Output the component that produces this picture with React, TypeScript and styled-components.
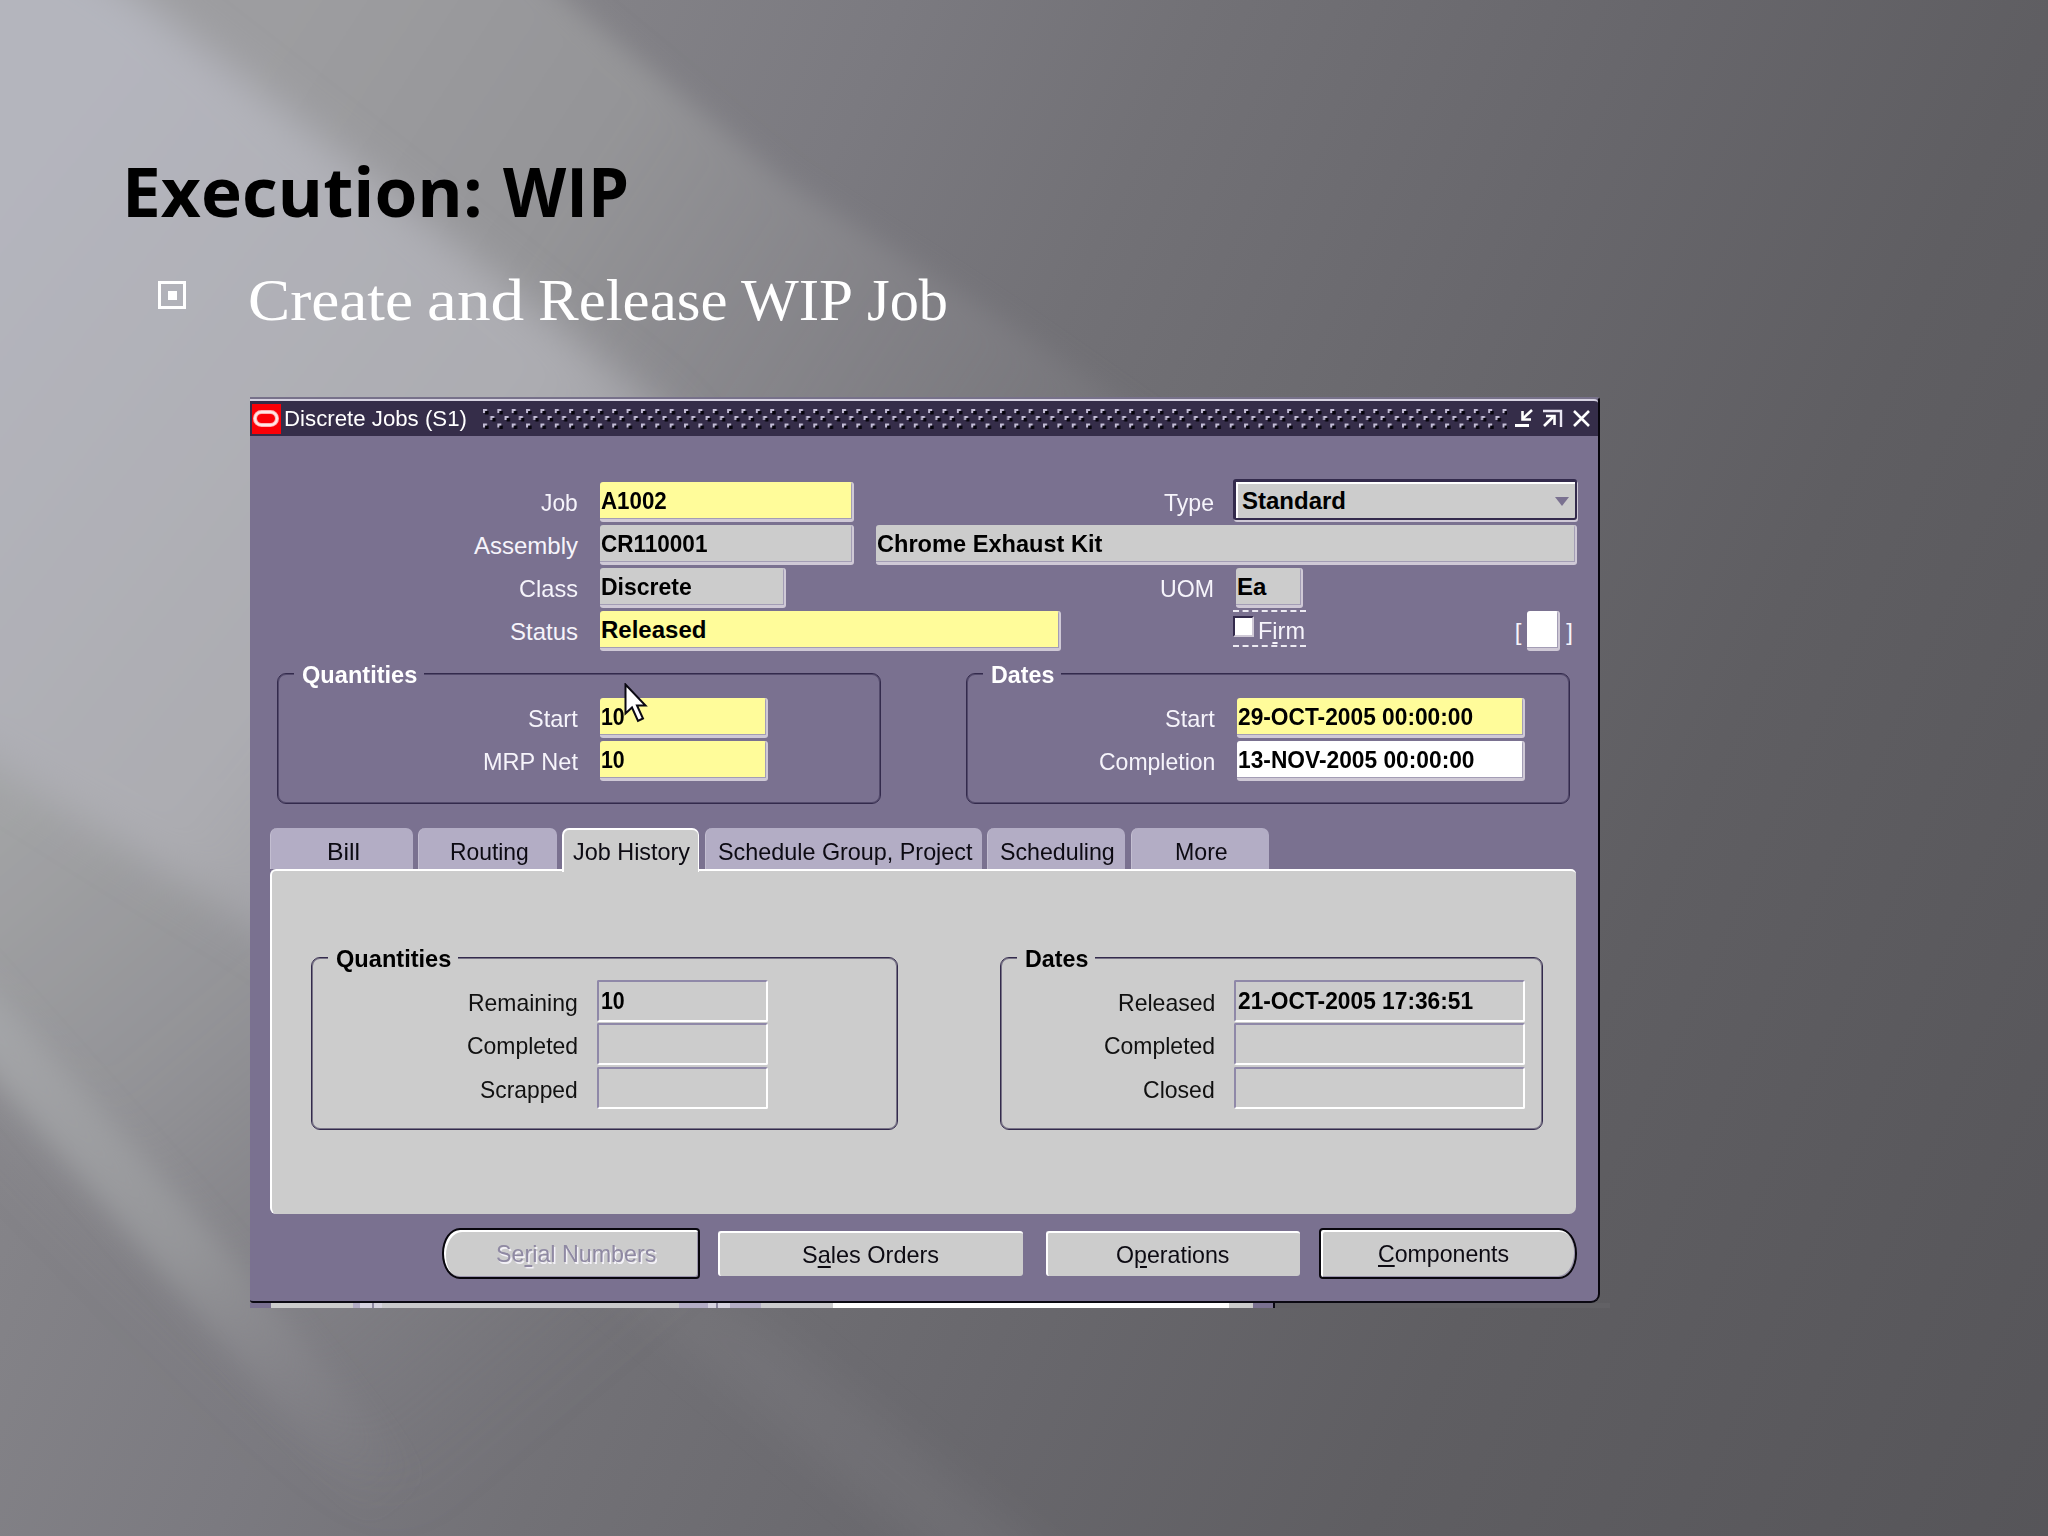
import React, { useLayoutEffect, useRef, useState } from 'react';
import styled, { createGlobalStyle, css } from 'styled-components';

const color = {
  body: '#7a7190',
  titleBar: '#352d49',
  line: '#332a4c',
  panel: '#cccccc',
  tab: '#b3adc5',
  yellow: '#fffc9a',
  edge: '#cfc9d6',
  edgeDark: '#a39db5',
  label: '#f6f4fb',
};

const GlobalStyle = createGlobalStyle`
  * { box-sizing: border-box; }
  html, body { margin: 0; padding: 0; }
  body { width: 2048px; height: 1536px; overflow: hidden; background: #6b6a6f; }
`;

/* ---------- text that is condensed or widened to a given width ---------- */

const FitBox = styled.span<{ $w: number }>`
  display: inline-block;
  flex: none;
  width: ${(p) => p.$w}px;
  text-align: left;
  white-space: pre;
`;
const FitInner = styled.span`
  display: inline-block;
  transform-origin: 0 50%;
`;

function Fit({ w, children }: { w: number; children: React.ReactNode }) {
  const ref = useRef<HTMLSpanElement>(null);
  const [scale, setScale] = useState(1);
  useLayoutEffect(() => {
    if (ref.current) setScale(w / ref.current.offsetWidth);
  }, [w]);
  return (
    <FitBox $w={w}>
      <FitInner ref={ref} style={{ transform: `scaleX(${scale})` }}>
        {children}
      </FitInner>
    </FitBox>
  );
}

/* ---------- slide ---------- */

const Slide = styled.main`
  position: relative;
  width: 2048px;
  height: 1536px;
  overflow: hidden;
  font-family: 'Liberation Sans', Arial, sans-serif;
`;
const BackdropSvg = styled.svg`
  position: absolute;
  inset: 0;
  display: block;
`;
const SlideContent = styled.div`
  position: relative;
  display: flex;
  flex-direction: column;
  height: 100%;
  padding-top: 141px;
`;
const SlideTitle = styled.h1`
  display: flex;
  gap: 20px;
  margin: 0 0 0 122px;
  height: 101px;
  line-height: 100px;
  font-family: 'Open Sans', 'Noto Sans', sans-serif;
  font-weight: 700;
  font-size: 68px;
  color: #000;
`;
const BulletRow = styled.div`
  display: flex;
  height: 80px;
  margin: 18px 0 57px 158px;
  font-family: 'Palatino Linotype', 'Book Antiqua', Palatino, 'Liberation Serif', serif;
  font-size: 59px;
  line-height: 80px;
  color: #fff;
`;
const BulletText = styled.div`
  display: flex;
  gap: 14px;
`;
const BulletMark = styled.span`
  display: grid;
  place-items: center;
  width: 28px;
  height: 28px;
  margin: 21px 62px 0 0;
  border: 3px solid #fff;
  &::after {
    content: '';
    width: 9px;
    height: 9px;
    background: #fff;
  }
`;

function Backdrop() {
  return (
    <BackdropSvg width="2048" height="1536" viewBox="0 0 2048 1536">
      <defs>
        <linearGradient id="base" gradientUnits="userSpaceOnUse" x1="0" y1="0" x2="2278" y2="1025">
          <stop offset="0" stopColor="#939297" />
          <stop offset=".22" stopColor="#838287" />
          <stop offset=".33" stopColor="#7b7a80" />
          <stop offset=".44" stopColor="#727176" />
          <stop offset=".6" stopColor="#68676c" />
          <stop offset=".75" stopColor="#5f5e62" />
          <stop offset="1" stopColor="#565559" />
        </linearGradient>
        <linearGradient id="upper" gradientUnits="userSpaceOnUse" x1="300" y1="0" x2="1250" y2="620">
          <stop offset="0" stopColor="#9d9da0" />
          <stop offset=".3" stopColor="#949497" />
          <stop offset=".6" stopColor="#858489" stopOpacity=".75" />
          <stop offset="1" stopColor="#7b7a80" stopOpacity="0" />
        </linearGradient>
        <linearGradient id="main" gradientUnits="userSpaceOnUse" x1="0" y1="200" x2="1000" y2="1000">
          <stop offset="0" stopColor="#b4b5bd" />
          <stop offset=".42" stopColor="#acacb1" />
          <stop offset="1" stopColor="#88878d" stopOpacity="0" />
        </linearGradient>
        <linearGradient id="lower" gradientUnits="userSpaceOnUse" x1="0" y1="800" x2="520" y2="1420">
          <stop offset="0" stopColor="#a3a4a6" />
          <stop offset=".4" stopColor="#929296" />
          <stop offset=".75" stopColor="#838287" stopOpacity=".5" />
          <stop offset="1" stopColor="#7b7a80" stopOpacity="0" />
        </linearGradient>
        <linearGradient id="streak" gradientUnits="userSpaceOnUse" x1="0" y1="1040" x2="400" y2="1500">
          <stop offset="0" stopColor="#a3a4a7" />
          <stop offset=".45" stopColor="#999a9d" stopOpacity=".8" />
          <stop offset=".75" stopColor="#8b8a8f" stopOpacity=".4" />
          <stop offset="1" stopColor="#88878c" stopOpacity="0" />
        </linearGradient>
        <filter id="soft12" x="-20%" y="-20%" width="140%" height="140%"><feGaussianBlur stdDeviation="13" /></filter>
        <filter id="soft20" x="-20%" y="-20%" width="140%" height="140%"><feGaussianBlur stdDeviation="20" /></filter>
        <filter id="soft35" x="-30%" y="-30%" width="160%" height="160%"><feGaussianBlur stdDeviation="34" /></filter>
      </defs>
      <rect width="2048" height="1536" fill="url(#base)" />
      <path d="M-200 -80 L480 -80 L566 0 L784 180 L1010 325 L1240 480 L1500 700 L400 700 Z" fill="url(#upper)" filter="url(#soft12)" />
      <path d="M-150 640 L500 900 L900 1536 L420 1536 L-150 930 Z" fill="url(#lower)" filter="url(#soft35)" />
      <path d="M-60 930 L240 1265 L520 1600 L440 1600 L-60 1010 Z" fill="url(#streak)" filter="url(#soft12)" />
      <path d="M-150 -190 L130 -10 L400 200 L653 400 L1000 760 L800 1300 L250 925 L-150 675 Z" fill="url(#main)" filter="url(#soft20)" />
      <path d="M480 1180 L760 1320 L1080 1580 L960 1580 Z" fill="#88878c" opacity=".2" filter="url(#soft20)" />
    </BackdropSvg>
  );
}

/* ---------- window ---------- */

const WindowFrame = styled.section`
  position: relative;
  display: flex;
  flex-direction: column;
  width: 1350px;
  height: 906px;
  margin-left: 250px;
  border-top: 2px solid #77718a;
  border-right: 2px solid #07050c;
  border-bottom: 2px solid #0b0912;
  border-radius: 0 3px 9px 3px;
  background: ${color.body};
`;
const TitleBar = styled.header`
  display: flex;
  align-items: center;
  flex: none;
  height: 37px;
  padding: 1px 0 0 2px;
  border-top: 2px solid #d7d3e2;
  border-radius: 0 4px 0 0;
  background: ${color.titleBar};
`;
const TitleText = styled.div`
  margin-left: 3px;
  width: 199px;
  font-size: 22px;
  line-height: 32px;
  color: #fff;
`;
const TitleIcons = styled.svg`
  display: block;
  margin-left: 7px;
`;

function OracleMark() {
  return (
    <svg width="29" height="30" viewBox="0 0 29 30">
      <rect width="29" height="30" fill="#fb0007" />
      <rect x="3" y="8" width="22" height="13" rx="6.5" fill="none" stroke="#ffb3b3" strokeWidth="4" />
      <rect x="3" y="8" width="22" height="13" rx="6.5" fill="none" stroke="#ffe9e9" strokeWidth="2" />
    </svg>
  );
}

function Grip() {
  return (
    <svg width="1024" height="24" viewBox="0 0 1024 24">
      <defs>
        <pattern id="dots" width="14.36" height="24" patternUnits="userSpaceOnUse">
          <path d="M2 4h3.500v3.500h-3.500zM9.200 11h3.500v3.500h-3.500zM2 18.500h3.500v3.500h-3.500z" fill="#05030c" />
          <path d="M0 2h4v2h-2v2h-2zM7.200 9h4v2h-2v2h-2zM0 16.500h4v2h-2v2h-2z" fill="#c3bdd6" />
        </pattern>
      </defs>
      <rect width="1024" height="24" fill="url(#dots)" />
    </svg>
  );
}

function WindowIcons() {
  return (
    <TitleIcons width="78" height="26" viewBox="1514 406 78 26" fill="none" stroke="#fff" strokeWidth="2.6">
      <path d="M1532 410l-9 8.500" />
      <path d="M1522.500 411v8.500h8.500" />
      <path d="M1515 425.500h14" strokeWidth="3" />
      <path d="M1543 411h18v16" stroke="#e9e6f2" strokeWidth="2.400" />
      <path d="M1544 426l9-9" />
      <path d="M1546 416h8.500v9" />
      <path d="M1574 411l15 15M1589 411l-15 15" />
    </TitleIcons>
  );
}

/* ---------- form parts ---------- */

const Row = styled.div<{ $h?: number }>`
  display: flex;
  flex: none;
  height: ${(p) => p.$h ?? 43.3}px;
`;
const Label = styled.label<{ $w?: number; $dark?: boolean }>`
  display: flex;
  justify-content: flex-end;
  ${(p) => (p.$w ? css`flex: none; width: ${p.$w}px;` : css`flex: 1;`)}
  margin-right: 22px;
  font-size: 24px;
  line-height: ${(p) => (p.$dark ? 45 : 42)}px;
  color: ${(p) => (p.$dark ? '#111' : color.label)};
`;
const Field = styled.div<{ $w: number; $bg?: string; $ml?: number }>`
  flex: none;
  width: ${(p) => p.$w}px;
  height: 40px;
  margin-left: ${(p) => p.$ml ?? 0}px;
  padding-left: 1px;
  border: solid ${color.edge};
  border-width: 0 2px 3px 0;
  border-radius: 3px;
  box-shadow: inset -1px -1px 0 ${color.edgeDark};
  background: ${(p) => p.$bg ?? color.panel};
  font-size: 24px;
  font-weight: 700;
  line-height: 38px;
  color: #000;
`;
const SunkenField = styled.div<{ $w: number }>`
  flex: none;
  width: ${(p) => p.$w}px;
  height: 42px;
  margin-left: -3px;
  padding-left: 2px;
  border: 2px solid;
  border-color: #8f88a8 #fff #fff #8f88a8;
  border-radius: 2px;
  font-size: 24px;
  font-weight: 700;
  line-height: 37px;
  color: #000;
`;
const Select = styled.div`
  display: flex;
  justify-content: space-between;
  align-items: center;
  width: 344px;
  height: 41px;
  margin: -3px 0 0 -3px;
  padding: 2px 6px 0 6px;
  border: solid ${color.line};
  border-width: 3px 2px 2px 3px;
  border-radius: 3px;
  box-shadow: inset 2px 2px 0 #fff, 1px 2px 0 ${color.edge};
  background: ${color.panel};
  font-size: 24px;
  font-weight: 700;
  line-height: 36px;
`;
const RightCell = styled.div`
  display: flex;
  justify-content: space-between;
  flex: none;
  width: 341px;
`;
const Firm = styled.div`
  display: flex;
  align-items: flex-start;
  width: 73px;
  height: 37px;
  margin: -1px 0 0 -3px;
  padding-top: 4px;
  border: dashed #eceaf2;
  border-width: 2px 0;
  font-size: 24px;
  line-height: 30px;
  color: ${color.label};
`;
const CheckBox = styled.span`
  flex: none;
  width: 21px;
  height: 21px;
  margin-right: 4px;
  border: 2px solid;
  border-color: ${color.line} ${color.edge} ${color.edge} ${color.line};
  background: #fff;
`;
const Flex = styled.div`
  display: flex;
  align-items: flex-start;
  gap: 6px;
  padding-right: 4px;
  font-size: 24px;
  line-height: 41px;
  color: ${color.label};
`;
const Form = styled.div`
  flex: none;
  width: 1327px;
  height: 192px;
  padding-top: 46px;
`;
const Groups = styled.div<{ $ml: number; $gap: number; $h: number; $mt: number }>`
  display: flex;
  flex: none;
  gap: ${(p) => p.$gap}px;
  height: ${(p) => p.$h}px;
  margin: ${(p) => p.$mt}px 0 0 ${(p) => p.$ml}px;
`;
const Group = styled.div<{ $w: number; $pt: number }>`
  position: relative;
  flex: none;
  width: ${(p) => p.$w}px;
  padding: ${(p) => p.$pt}px 0 0 1px;
  border: 1px solid ${color.line};
  border-radius: 9px;
  box-shadow: inset 0 0 0 1px rgba(51, 42, 76, 0.55);
`;
const Legend = styled.div<{ $dark?: boolean; $left: number; $w: number }>`
  position: absolute;
  top: -14px;
  left: ${(p) => p.$left}px;
  width: ${(p) => p.$w}px;
  height: 28px;
  padding-left: 8px;
  background: ${(p) => (p.$dark ? color.panel : color.body)};
  font-size: 24px;
  font-weight: 700;
  line-height: 29px;
  color: ${(p) => (p.$dark ? '#000' : '#fff')};
`;
const Pointer = styled.svg`
  position: absolute;
  left: 374px;
  top: 284px;
`;

/* ---------- tabs ---------- */

const TabStrip = styled.nav`
  display: flex;
  flex: none;
  height: 41px;
  margin: 24px 0 0 20px;
`;
const Tab = styled.div<{ $w: number; $gap: number; $active?: boolean }>`
  display: flex;
  justify-content: center;
  position: relative;
  flex: none;
  width: ${(p) => p.$w}px;
  height: 41px;
  margin-right: ${(p) => p.$gap}px;
  padding-left: 2px;
  border-radius: 7px 7px 0 0;
  border-left: 1px solid #c3bed1;
  background: ${color.tab};
  font-size: 24px;
  line-height: 47px;
  color: #0c0a12;
  ${(p) =>
    p.$active &&
    css`
      z-index: 1;
      height: 44px;
      padding-left: 1px;
      border: solid #fff;
      border-width: 2px 1px 0 2px;
      line-height: 43px;
      background: ${color.panel};
    `}
`;
const TabPanel = styled.div`
  flex: none;
  width: 1306px;
  height: 345px;
  margin-left: 20px;
  border: solid #fff;
  border-width: 2px 0 0 2px;
  border-radius: 6px 5px 7px 6px;
  background: ${color.panel};
`;

/* ---------- buttons ---------- */

const ButtonBar = styled.footer`
  display: flex;
  align-items: center;
  flex: none;
  height: 51px;
  margin: 14px 0 0 192px;
`;
const Button = styled.button<{ $w: number; $gap: number; $pl?: number; $pr?: number; $end?: 'left' | 'right'; $off?: boolean }>`
  display: flex;
  justify-content: center;
  align-items: center;
  flex: none;
  width: ${(p) => p.$w}px;
  height: 45px;
  margin: 0 ${(p) => p.$gap}px 0 0;
  padding: 0 ${(p) => p.$pr ?? 0}px 0 ${(p) => p.$pl ?? 0}px;
  border: solid #fff;
  border-width: 2px 0 0 2px;
  border-radius: 3px;
  background: ${color.panel};
  font: 24px/40px 'Liberation Sans', Arial, sans-serif;
  color: #0c0a12;
  ${(p) =>
    p.$end &&
    css`
      height: 51px;
      border: 2px solid #08060d;
      box-shadow: inset 2px 2px 0 #fff, inset -1px -1px 0 #9993ab;
      border-radius: ${p.$end === 'left' ? '18px 4px 4px 18px / 25px 4px 4px 25px' : '4px 18px 18px 4px / 4px 25px 25px 4px'};
    `}
  ${(p) =>
    p.$off &&
    css`
      color: #8f89a3;
      text-shadow: 1.5px 1.5px 0 #f4f2f8;
    `}
`;
const Key = styled.u`
  text-underline-offset: 3px;
  text-decoration-thickness: 2px;
`;

/* ---------- sliver of the window behind ---------- */

const BehindStrip = styled.div`
  display: flex;
  flex: none;
  width: 1360px;
  height: 5px;
  margin-left: 250px;
  background: #626165;
`;
const Sliver = styled.span<{ $w: number; $bg: string }>`
  width: ${(p) => p.$w}px;
  background: ${(p) => p.$bg};
`;
const slivers: [number, string][] = [
  [21, color.body], [82, '#cccccc'], [7, color.tab], [12, '#d6d3df'], [2, '#8d88a0'], [8, '#d6d3df'],
  [297, '#c9c9cb'], [29, color.tab], [8, '#d6d3df'], [2, '#8d88a0'], [12, '#d6d3df'], [31, color.tab],
  [72, '#cbcbcd'], [396, '#ffffff'], [24, '#cccccc'], [20, color.body], [2, '#0b0912'],
];

function DataRow({ label, lw, first, dark, children }: {
  label: string; lw: number; first: number; dark?: boolean; children: React.ReactNode;
}) {
  return (
    <Row>
      <Label $w={first} $dark={dark}><Fit w={lw}>{label}</Fit></Label>
      {children}
    </Row>
  );
}

export default function App() {
  return (
    <Slide>
      <GlobalStyle />
      <Backdrop />
      <SlideContent>
        <SlideTitle>
          <Fit w={361}>Execution:</Fit>
          <Fit w={126}>WIP</Fit>
        </SlideTitle>
        <BulletRow>
          <BulletMark />
          <BulletText>
            <Fit w={165}>Create</Fit>
            <Fit w={97}>and</Fit>
            <Fit w={189}>Release</Fit>
            <Fit w={112}>WIP</Fit>
            <Fit w={81}>Job</Fit>
          </BulletText>
        </BulletRow>

        <WindowFrame>
          <TitleBar>
            <OracleMark />
            <TitleText><Fit w={183}>Discrete Jobs (S1)</Fit></TitleText>
            <Grip />
            <WindowIcons />
          </TitleBar>

          <Form>
            <Row $h={43}>
              <Label $w={328}><Fit w={37}>Job</Fit></Label>
              <Field $w={254} $bg={color.yellow}><Fit w={66}>A1002</Fit></Field>
              <Label><Fit w={50}>Type</Fit></Label>
              <RightCell>
                <Select>
                  <Fit w={104}>Standard</Fit>
                  <svg width="14" height="9" viewBox="0 0 14 9"><path d="M0 0h14l-7 9z" fill="#7a7190" /></svg>
                </Select>
              </RightCell>
            </Row>
            <Row $h={43}>
              <Label $w={328}><Fit w={104}>Assembly</Fit></Label>
              <Field $w={254}><Fit w={106}>CR110001</Fit></Field>
              <Field $w={701} $ml={22}><Fit w={225}>Chrome Exhaust Kit</Fit></Field>
            </Row>
            <Row $h={43}>
              <Label $w={328}><Fit w={59}>Class</Fit></Label>
              <Field $w={186}><Fit w={91}>Discrete</Fit></Field>
              <Label><Fit w={54}>UOM</Fit></Label>
              <RightCell><Field $w={67}><Fit w={29}>Ea</Fit></Field></RightCell>
            </Row>
            <Row $h={43}>
              <Label $w={328}><Fit w={68}>Status</Fit></Label>
              <Field $w={461} $bg={color.yellow}><Fit w={105}>Released</Fit></Field>
              <Label />
              <RightCell>
                <Firm><CheckBox /><Fit w={47}>F<Key>i</Key>rm</Fit></Firm>
                <Flex><span>[</span><Field $w={33} $bg="#ffffff" /><span>]</span></Flex>
              </RightCell>
            </Row>
          </Form>

          <Groups $ml={27} $gap={85} $h={131} $mt={45}>
            <Group $w={604} $pt={24}>
              <Legend $left={16} $w={130}><Fit w={115}>Quantities</Fit></Legend>
              <DataRow label="Start" lw={50} first={299}>
                <Field $w={168} $bg={color.yellow}><Fit w={24}>10</Fit></Field>
              </DataRow>
              <DataRow label="MRP Net" lw={95} first={299}>
                <Field $w={168} $bg={color.yellow}><Fit w={24}>10</Fit></Field>
              </DataRow>
            </Group>
            <Group $w={604} $pt={24}>
              <Legend $left={16} $w={78}><Fit w={63}>Dates</Fit></Legend>
              <DataRow label="Start" lw={50} first={247}>
                <Field $w={288} $bg={color.yellow}><Fit w={235}>29-OCT-2005 00:00:00</Fit></Field>
              </DataRow>
              <DataRow label="Completion" lw={116} first={247}>
                <Field $w={288} $bg="#ffffff"><Fit w={237}>13-NOV-2005 00:00:00</Fit></Field>
              </DataRow>
            </Group>
          </Groups>

          <TabStrip>
            <Tab $w={143} $gap={5}><Fit w={33}>Bill</Fit></Tab>
            <Tab $w={139} $gap={5}><Fit w={79}>Routing</Fit></Tab>
            <Tab $w={137} $gap={6} $active><Fit w={117}>Job History</Fit></Tab>
            <Tab $w={277} $gap={5}><Fit w={254}>Schedule Group, Project</Fit></Tab>
            <Tab $w={138} $gap={6}><Fit w={115}>Scheduling</Fit></Tab>
            <Tab $w={138} $gap={0}><Fit w={53}>More</Fit></Tab>
          </TabStrip>
          <TabPanel>
            <Groups $ml={39} $gap={102} $h={173} $mt={86}>
              <Group $w={587} $pt={22}>
                <Legend $dark $left={16} $w={130}><Fit w={115}>Quantities</Fit></Legend>
                <DataRow dark label="Remaining" lw={110} first={265}>
                  <SunkenField $w={171}><Fit w={24}>10</Fit></SunkenField>
                </DataRow>
                <DataRow dark label="Completed" lw={111} first={265}><SunkenField $w={171} /></DataRow>
                <DataRow dark label="Scrapped" lw={98} first={265}><SunkenField $w={171} /></DataRow>
              </Group>
              <Group $w={543} $pt={22}>
                <Legend $dark $left={16} $w={78}><Fit w={63}>Dates</Fit></Legend>
                <DataRow dark label="Released" lw={97} first={213}>
                  <SunkenField $w={291}><Fit w={235}>21-OCT-2005 17:36:51</Fit></SunkenField>
                </DataRow>
                <DataRow dark label="Completed" lw={111} first={213}><SunkenField $w={291} /></DataRow>
                <DataRow dark label="Closed" lw={72} first={213}><SunkenField $w={291} /></DataRow>
              </Group>
            </Groups>
          </TabPanel>

          <ButtonBar>
            <Button $w={258} $gap={18} $pl={9} $end="left" $off><Fit w={160}>Se<Key>r</Key>ial Numbers</Fit></Button>
            <Button $w={305} $gap={23} $pr={2}><Fit w={137}>S<Key>a</Key>les Orders</Fit></Button>
            <Button $w={254} $gap={19} $pr={3}><Fit w={113}>O<Key>p</Key>erations</Fit></Button>
            <Button $w={258} $gap={0} $pr={9} $end="right"><Fit w={131}><Key>C</Key>omponents</Fit></Button>
          </ButtonBar>

          <Pointer width="24" height="40" viewBox="0 0 24 40">
            <path d="M1.500 1.500v29l6.500-6 6 13.500 5-2.500-6-13h8.500z" fill="#fff" stroke="#0b0912" strokeWidth="2" />
          </Pointer>
        </WindowFrame>
        <BehindStrip>
          {slivers.map(([w, bg], i) => <Sliver key={i} $w={w} $bg={bg} />)}
        </BehindStrip>
      </SlideContent>
    </Slide>
  );
}
